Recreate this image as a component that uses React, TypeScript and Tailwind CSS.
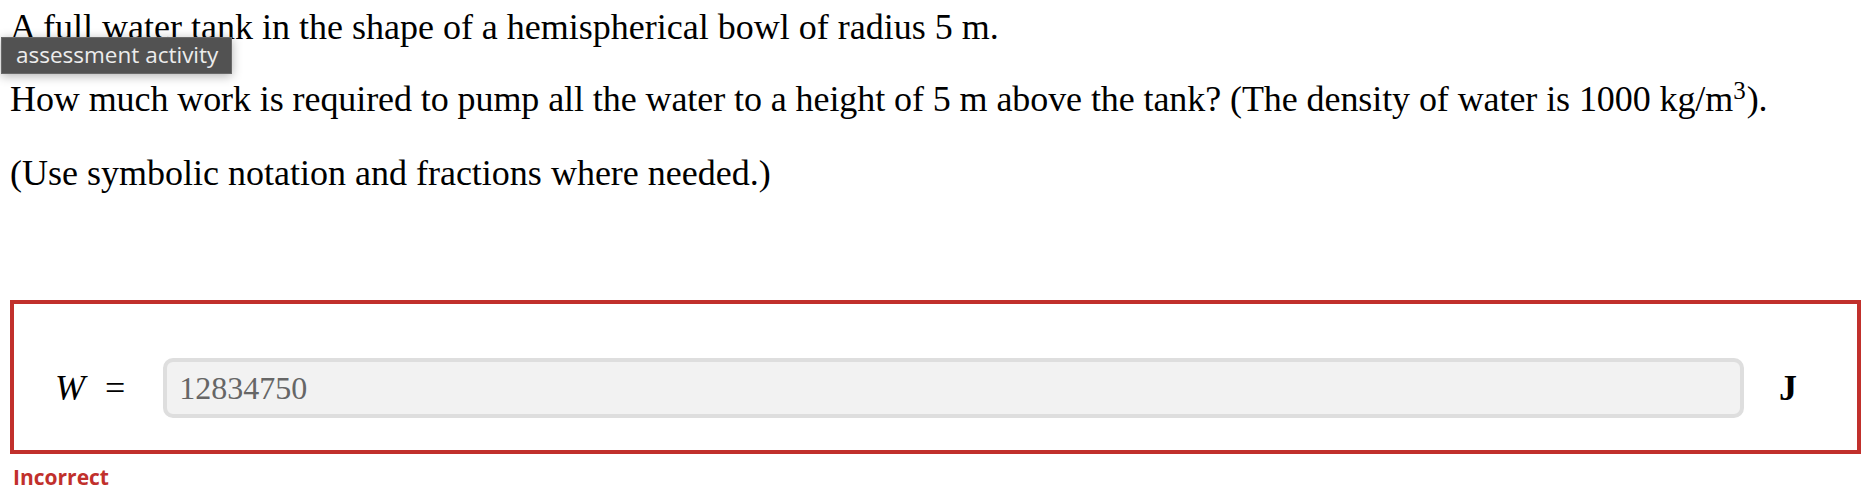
import React from "react";

const App = () => {
  return (
    <div className="relative w-[1868px] h-[494px] bg-white overflow-hidden font-['Liberation_Serif','Times_New_Roman',serif] text-black">
      <div className="pl-[10px] pt-[7px] text-[36px] leading-[41px]">
        <p>A full water tank in the shape of a hemispherical bowl of radius 5 m.</p>
        <p className="mt-[31px] tracking-[-0.08px]">
          How much work is required to pump all the water to a height of 5 m above the tank? (The density of water is 1000 kg/m
          <sup className="text-[25px] mr-[1px]">3</sup>).
        </p>
        <p className="mt-[33px]">(Use symbolic notation and fractions where needed.)</p>
      </div>

      <div className="mt-[106px] ml-[10px] w-[1851px] h-[154px] border-4 border-[#c1302c] pt-[54px]">
        <div className="flex items-center pl-[41px] pr-[60px]">
          <span className="italic text-[36px] leading-[40px]">W</span>
          <span className="text-[36px] leading-[40px] ml-[20px]">=</span>
          <div className="ml-[38px] flex-1 h-[60px] rounded-[10px] border-4 border-[#dedede] bg-[#f2f2f2] flex items-center pl-[12px] text-[32px] text-[#666666]">
            12834750
          </div>
          <span className="ml-[35px] font-bold text-[36px] leading-[40px]">J</span>
        </div>
      </div>

      <div className="mt-[9px] pl-[13px] font-['Open_Sans',sans-serif] font-bold text-[21px] leading-[28px] text-[#c1302c]">
        Incorrect
      </div>

      <div className="absolute left-[1px] top-[37px] h-[37px] w-[231px] flex items-center pl-[14px] bg-[#525252] border border-[#6a6a6a] shadow-[0_2px_10px_rgba(0,0,0,0.3)] font-['Open_Sans',sans-serif] font-medium text-[22.5px] leading-none text-[#ececec]">
        assessment activity
      </div>
    </div>
  );
};

export default App;
